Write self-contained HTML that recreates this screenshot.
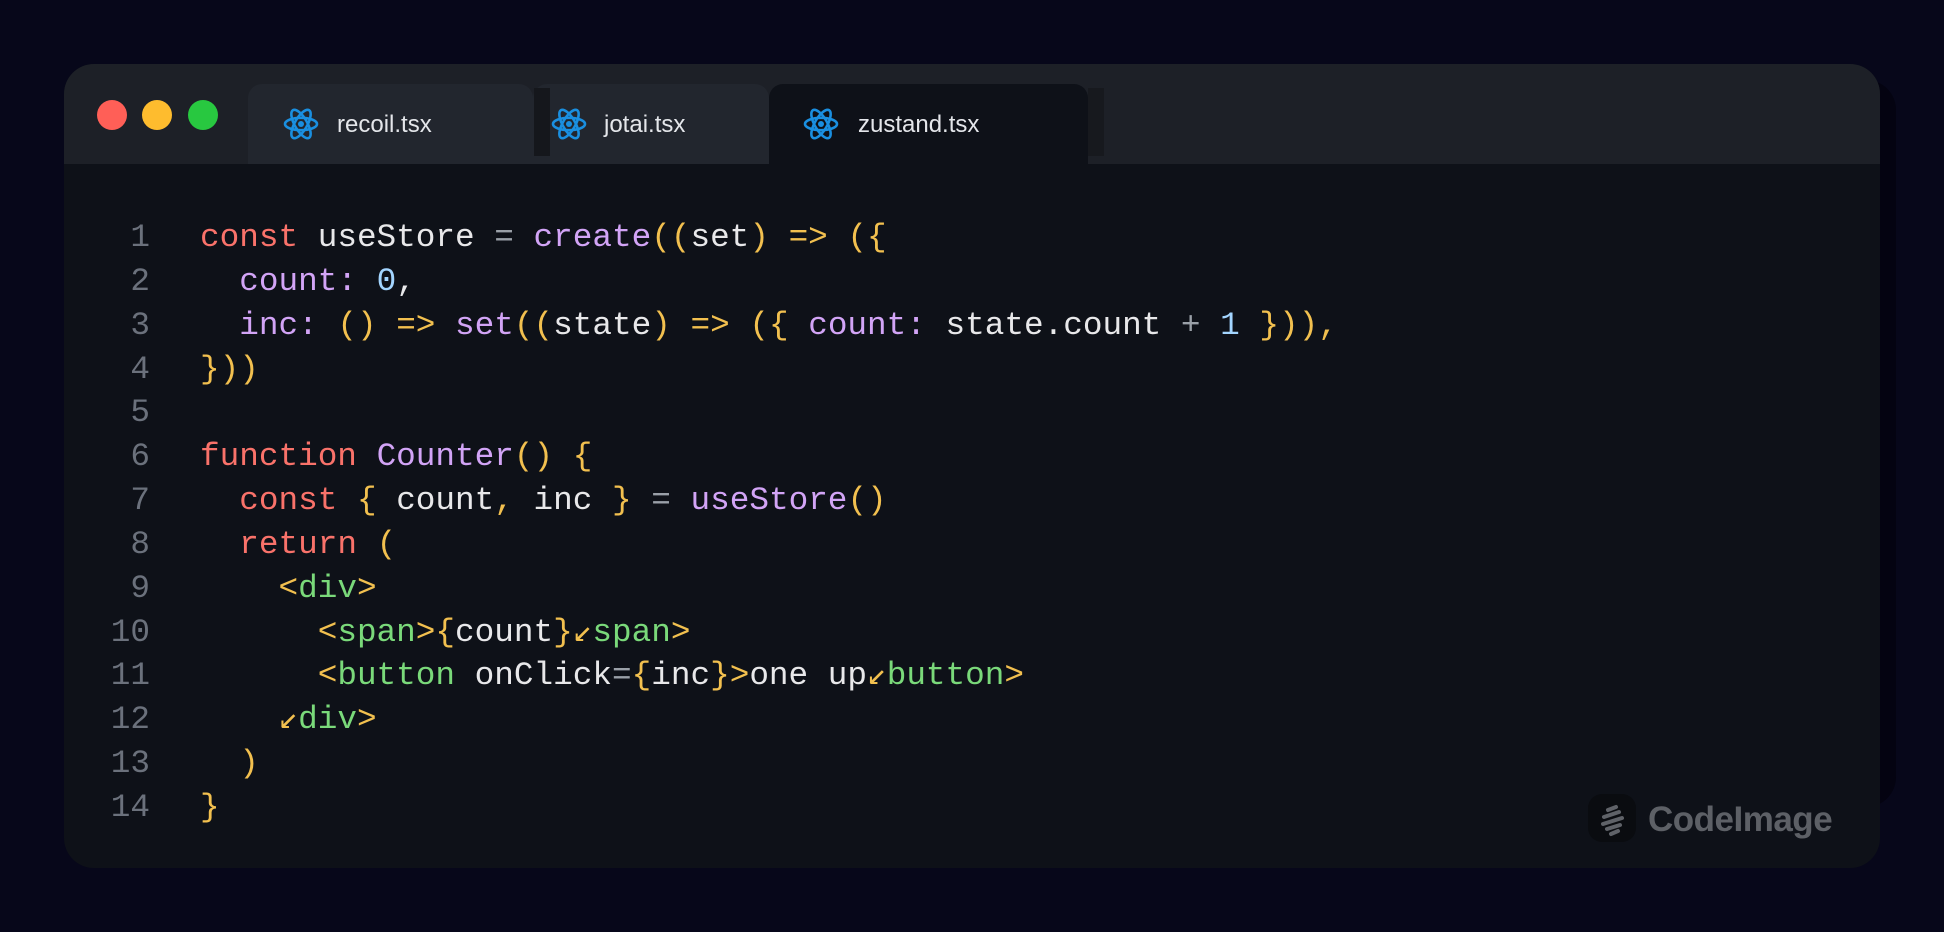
<!DOCTYPE html>
<html><head><meta charset="utf-8"><style>
html,body{margin:0;padding:0}
body{width:1944px;height:932px;background:#07071a;position:relative;overflow:hidden;font-family:"Liberation Sans",sans-serif}
.shadow{position:absolute;left:80px;top:80px;width:1816px;height:727px;background:#040311;border-radius:30px}
.win{position:absolute;left:64px;top:64px;width:1816px;height:804px;background:#0e1118;border-radius:30px;overflow:hidden}
.hdr{position:absolute;left:0;top:0;width:1816px;height:100px;background:#1d2027}
.dot{position:absolute;top:36px;width:30px;height:30px;border-radius:50%}
.tab{position:absolute;top:20px;height:80px;background:#22262e;border-radius:14px 14px 0 0}
.sep{position:absolute;top:24px;height:68px;width:16px;background:#15171c}
.tt{position:absolute;top:47px;font-size:24px;color:#e4e6ea}
.ic{position:absolute;top:42px}
pre{margin:0;position:absolute;font-family:"Liberation Mono","DejaVu Sans Mono",monospace;font-size:32.7px;line-height:43.85px}
.ln{left:16px;top:152px;width:70px;text-align:right;color:#6b717c}
.code{left:136px;top:152px;color:#e8e8ea}
.k{color:#f9726a}.f{color:#d2a4f6}.y{color:#f2c04f}.n{color:#a3d5ff}.g{color:#7ad97a}.o{color:#9aa0a8}
.logo{position:absolute;left:1524px;top:730px;width:48px;height:48px;border-radius:14px;background:#0a0c10}
.lt{position:absolute;left:1584px;top:736px;font-size:35px;font-weight:bold;color:#5d6066;letter-spacing:-0.5px}
</style></head><body>
<div class="shadow"></div>
<div class="win">
 <div class="hdr"></div>
 <div class="dot" style="left:33px;background:#ff5f57"></div>
 <div class="dot" style="left:78px;background:#febc2e"></div>
 <div class="dot" style="left:124px;background:#28c840"></div>
 <div class="tab" style="left:184px;width:285px"></div>
 <div class="tab" style="left:469px;width:236px"></div>
 <div class="sep" style="left:470px"></div>
 <div class="tab" style="left:705px;width:319px;background:#0e1118"></div>
 <div class="sep" style="left:1024px;background:#17191e"></div>
 <svg class="ic" style="left:219px" width="36" height="36" viewBox="-18 -18 36 36" fill="none" stroke="#1a8fe0" stroke-width="2.6"><ellipse rx="16" ry="6.2"/><ellipse rx="16" ry="6.2" transform="rotate(60)"/><ellipse rx="16" ry="6.2" transform="rotate(120)"/><circle r="3" fill="#1a8fe0" stroke="none"/></svg>
 <div class="tt" style="left:273px">recoil.tsx</div>
 <svg class="ic" style="left:487px" width="36" height="36" viewBox="-18 -18 36 36" fill="none" stroke="#1a8fe0" stroke-width="2.6"><ellipse rx="16" ry="6.2"/><ellipse rx="16" ry="6.2" transform="rotate(60)"/><ellipse rx="16" ry="6.2" transform="rotate(120)"/><circle r="3" fill="#1a8fe0" stroke="none"/></svg>
 <div class="tt" style="left:540px">jotai.tsx</div>
 <svg class="ic" style="left:739px" width="36" height="36" viewBox="-18 -18 36 36" fill="none" stroke="#1a8fe0" stroke-width="2.6"><ellipse rx="16" ry="6.2"/><ellipse rx="16" ry="6.2" transform="rotate(60)"/><ellipse rx="16" ry="6.2" transform="rotate(120)"/><circle r="3" fill="#1a8fe0" stroke="none"/></svg>
 <div class="tt" style="left:794px">zustand.tsx</div>
<pre class="ln">1
2
3
4
5
6
7
8
9
10
11
12
13
14</pre>
<pre class="code"><span class="k">const</span> useStore <span class="o">=</span> <span class="f">create</span><span class="y">((</span>set<span class="y">)</span> <span class="y">=&gt;</span> <span class="y">({</span>
  <span class="f">count:</span> <span class="n">0</span>,
  <span class="f">inc:</span> <span class="y">()</span> <span class="y">=&gt;</span> <span class="f">set</span><span class="y">((</span>state<span class="y">)</span> <span class="y">=&gt;</span> <span class="y">({</span> <span class="f">count:</span> state.count <span class="o">+</span> <span class="n">1</span> <span class="y">})),</span>
<span class="y">}))</span>

<span class="k">function</span> <span class="f">Counter</span><span class="y">()</span> <span class="y">{</span>
  <span class="k">const</span> <span class="y">{</span> count<span class="y">,</span> inc <span class="y">}</span> <span class="o">=</span> <span class="f">useStore</span><span class="y">()</span>
  <span class="k">return</span> <span class="y">(</span>
    <span class="y">&lt;</span><span class="g">div</span><span class="y">&gt;</span>
      <span class="y">&lt;</span><span class="g">span</span><span class="y">&gt;{</span>count<span class="y">}↙</span><span class="g">span</span><span class="y">&gt;</span>
      <span class="y">&lt;</span><span class="g">button</span> onClick<span class="o">=</span><span class="y">{</span>inc<span class="y">}&gt;</span>one up<span class="y">↙</span><span class="g">button</span><span class="y">&gt;</span>
    <span class="y">↙</span><span class="g">div</span><span class="y">&gt;</span>
  <span class="y">)</span>
<span class="y">}</span></pre>
 <div class="logo"><svg width="48" height="48" viewBox="0 0 48 48" stroke="#5f6268" stroke-width="4" stroke-linecap="round"><line x1="20" y1="16" x2="28" y2="13"/><line x1="16" y1="23" x2="31" y2="18"/><line x1="15" y1="30" x2="34" y2="24"/><line x1="19" y1="35" x2="32" y2="31"/><line x1="23" y1="40" x2="30" y2="37"/></svg></div>
 <div class="lt">CodeImage</div>
</div>
</body></html>
